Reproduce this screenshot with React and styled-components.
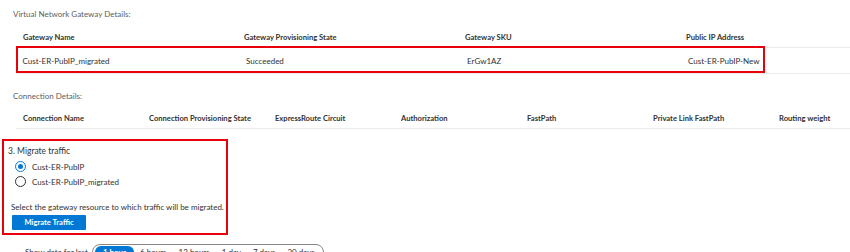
import styled, { createGlobalStyle } from 'styled-components'

const GlobalStyle = createGlobalStyle`
  html, body { margin: 0; padding: 0; background: #fff; }
  body {
    font-family: Lato, 'Noto Sans', sans-serif;
    color: #323130;
    font-size: 8px;
    overflow: hidden;
    width: 850px;
    height: 252px;
  }
`

const Page = styled.div`
  display: flex;
  flex-direction: column;
  padding: 8px 0 0 0;
`

const SectionLabel = styled.div`
  color: #605e5c;
  line-height: 12px;
  padding-left: 13px;
  margin-top: ${p => p.$top || 0}px;
  margin-bottom: ${p => p.$gap || 0}px;
`

const Table = styled.div`
  display: flex;
  flex-direction: column;
  margin-left: 16px;
`

const HeaderRow = styled.div`
  display: flex;
  height: 16px;
  align-items: center;
  border-bottom: 1px solid #edebe9;
  padding-bottom: 2px;
`

const DataRow = styled.div`
  display: flex;
  border-bottom: 1px solid #edebe9;
`

const Highlight = styled.div`
  display: flex;
  align-items: center;
  width: 749px;
  height: 27px;
  box-sizing: border-box;
  border: 2.5px solid #e8000b;
  margin-top: -2px;
  padding-top: 3px;
`

const Cell = styled.div`
  flex: 0 0 ${p => p.$w}px;
  padding-left: ${p => p.$pad ?? 7}px;
  box-sizing: border-box;
  white-space: nowrap;
  font-weight: ${p => (p.$head ? 700 : 400)};
  font-size: ${p => (p.$head ? 7.6 : 8)}px;
  color: #323130;
`

const MigrateBox = styled.section`
  margin: 10px 0 0 2px;
  width: 226px;
  height: 96px;
  box-sizing: border-box;
  border: 2.5px solid #e8000b;
  padding: 4px 0 0 4px;
  display: flex;
  flex-direction: column;
`

const StepTitle = styled.div`
  font-size: 8.5px;
  line-height: 12px;
  margin-bottom: 2px;
`

const RadioRow = styled.label`
  display: flex;
  align-items: center;
  gap: 6px;
  height: 15px;
  padding-left: 7px;
`

const RadioCircle = styled.span`
  width: 9px;
  height: 9px;
  border-radius: 50%;
  border: 1px solid ${p => (p.$checked ? '#0078d4' : '#323130')};
  display: flex;
  align-items: center;
  justify-content: center;
  &::after {
    content: '';
    width: 5px;
    height: 5px;
    border-radius: 50%;
    background: ${p => (p.$checked ? '#0078d4' : 'transparent')};
  }
`

const HelpText = styled.div`
  margin: 12px 0 0 3px;
  line-height: 12px;
  white-space: nowrap;
`

const PrimaryButton = styled.button`
  margin: 2px 0 0 4px;
  width: 74px;
  height: 15px;
  border: none;
  border-radius: 1px;
  background: #0078d4;
  color: #fff;
  font-family: inherit;
  font-size: 7.6px;
  font-weight: 700;
  padding: 0;
  line-height: 15px;
`

const TimeBar = styled.div`
  display: flex;
  align-items: center;
  margin: 9px 0 0 25px;
  gap: 4px;
`

const Pills = styled.div`
  display: flex;
  align-items: center;
  border: 1px solid #8a8886;
  border-radius: 9px;
  height: 16px;
  padding: 0 2px;
  box-sizing: border-box;
`

const Pill = styled.span`
  padding: 0 ${p => (p.$active ? 8 : 6)}px;
  height: 12px;
  line-height: 12px;
  border-radius: 7px;
  background: ${p => (p.$active ? '#0078d4' : 'transparent')};
  color: ${p => (p.$active ? '#fff' : '#323130')};
  font-weight: ${p => (p.$active ? 700 : 400)};
  white-space: nowrap;
`

const gatewayCols = ['Gateway Name', 'Gateway Provisioning State', 'Gateway SKU', 'Public IP Address']
const gatewayRow = ['Cust-ER-PubIP_migrated', 'Succeeded', 'ErGw1AZ', 'Cust-ER-PubIP-New']
const connectionCols = [
  'Connection Name',
  'Connection Provisioning State',
  'ExpressRoute Circuit',
  'Authorization',
  'FastPath',
  'Private Link FastPath',
  'Routing weight',
]
const ranges = ['1 hour', '6 hours', '12 hours', '1 day', '7 days', '30 days']

export default function App() {
  return (
    <Page>
      <GlobalStyle />
      <SectionLabel $gap={9}>Virtual Network Gateway Details:</SectionLabel>
      <Table>
        <HeaderRow>
          {gatewayCols.map(c => (
            <Cell key={c} $w={221} $head>{c}</Cell>
          ))}
        </HeaderRow>
        <DataRow>
          <Highlight>
            {gatewayRow.map((c, i) => (
              <Cell key={c} $w={i === 3 ? 80 : 221} $pad={i === 0 ? 4.5 : 7}>{c}</Cell>
            ))}
          </Highlight>
        </DataRow>
      </Table>

      <SectionLabel $top={16} $gap={8}>Connection Details:</SectionLabel>
      <Table>
        <HeaderRow>
          {connectionCols.map(c => (
            <Cell key={c} $w={126} $head>{c}</Cell>
          ))}
        </HeaderRow>
      </Table>

      <MigrateBox>
        <StepTitle>3. Migrate traffic</StepTitle>
        <RadioRow>
          <RadioCircle $checked />
          Cust-ER-PubIP
        </RadioRow>
        <RadioRow>
          <RadioCircle />
          Cust-ER-PubIP_migrated
        </RadioRow>
        <HelpText>Select the gateway resource to which traffic will be migrated.</HelpText>
        <PrimaryButton>Migrate Traffic</PrimaryButton>
      </MigrateBox>

      <TimeBar>
        <span>Show data for last</span>
        <Pills>
          {ranges.map((r, i) => (
            <Pill key={r} $active={i === 0}>{r}</Pill>
          ))}
        </Pills>
      </TimeBar>
    </Page>
  )
}
